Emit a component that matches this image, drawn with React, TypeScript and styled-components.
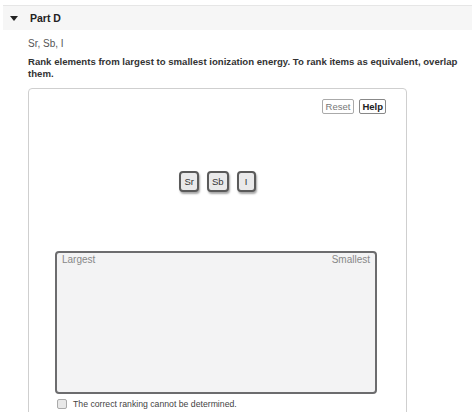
import React from "react";
import styled, { createGlobalStyle } from "styled-components";

const Global = createGlobalStyle`
  html, body { margin: 0; padding: 0; background: #fff; }
  body { font-family: "Liberation Sans", Arial, sans-serif; color: #333; overflow: hidden; }
`;

const Page = styled.div`
  width: 474px;
  height: 412px;
  overflow: hidden;
  padding-top: 5px;
  box-sizing: border-box;
`;

const Header = styled.div`
  margin: 0 2px 0 3px;
  height: 25px;
  border-top: 1px solid #e6e6e6;
  background: #f6f6f6;
  display: flex;
  align-items: center;
  gap: 12px;
  padding-left: 7px;
  box-sizing: border-box;
`;

const Caret = styled.span`
  width: 0;
  height: 0;
  border-left: 4px solid transparent;
  border-right: 4px solid transparent;
  border-top: 5px solid #222;
`;

const HeaderTitle = styled.span`
  font-size: 10.5px;
  font-weight: bold;
  color: #222;
`;

const Body = styled.div`
  padding: 0 0 0 28px;
`;

const Elements = styled.div`
  margin-top: 7px;
  font-size: 10px;
  color: #555;
  line-height: 14px;
`;

const Prompt = styled.div`
  margin-top: 5px;
  font-size: 9.6px;
  font-weight: bold;
  color: #333;
  line-height: 12px;
  width: 440px;
`;

const Panel = styled.div`
  margin-top: 8px;
  width: 379px;
  height: 340px;
  border: 1px solid #cfcfcf;
  border-radius: 4px;
  box-sizing: border-box;
  padding: 10px 29px 0 26px;
`;

const Toolbar = styled.div`
  display: flex;
  justify-content: flex-end;
  gap: 5px;
  margin-right: -9px;
`;

const ToolButton = styled.button<{ $strong?: boolean }>`
  font-family: "Liberation Sans", Arial, sans-serif;
  font-size: 9.5px;
  font-weight: ${(p) => (p.$strong ? "bold" : "normal")};
  color: ${(p) => (p.$strong ? "#222" : "#777")};
  background: #fff;
  border: 1px solid ${(p) => (p.$strong ? "#888" : "#aaa")};
  border-radius: 2px;
  height: 15px;
  padding: 0 ${(p) => (p.$strong ? "2px" : "3px")};
  line-height: 13px;
`;

const Tiles = styled.div`
  margin-top: 57px;
  display: flex;
  justify-content: center;
  gap: 8px;
  padding-left: 3px;
`;

const Tile = styled.div`
  min-width: 9px;
  height: 17px;
  padding: 0 3px;
  border: 2px solid #5a5a5a;
  border-radius: 4px;
  background: #e9e9ea;
  box-shadow: 1px 2px 2px rgba(0, 0, 0, 0.35);
  font-size: 9.5px;
  color: #333;
  display: flex;
  align-items: center;
  justify-content: center;
`;

const Ranking = styled.div`
  margin-top: 59px;
  height: 143px;
  border: 2px solid #6c6c6e;
  border-radius: 4px;
  background: #f3f3f4;
  box-sizing: border-box;
  display: flex;
  justify-content: space-between;
  padding: 0 5px 0 5px;
  font-size: 10px;
  color: #888;
  line-height: 13px;
`;

const Footer = styled.label`
  margin-top: 5px;
  display: flex;
  align-items: center;
  gap: 6px;
  padding-left: 2px;
  font-size: 8.7px;
  color: #444;
`;

const Check = styled.span`
  width: 8px;
  height: 8px;
  border: 1px solid #aaa;
  border-radius: 2px;
  background: #e8e8e8;
`;

export default function App() {
  return (
    <Page>
      <Global />
      <Header>
        <Caret />
        <HeaderTitle>Part D</HeaderTitle>
      </Header>
      <Body>
        <Elements>Sr, Sb, I</Elements>
        <Prompt>
          Rank elements from largest to smallest ionization energy. To rank items as equivalent, overlap them.
        </Prompt>
        <Panel>
          <Toolbar>
            <ToolButton>Reset</ToolButton>
            <ToolButton $strong>Help</ToolButton>
          </Toolbar>
          <Tiles>
            <Tile>Sr</Tile>
            <Tile>Sb</Tile>
            <Tile>I</Tile>
          </Tiles>
          <Ranking>
            <span>Largest</span>
            <span>Smallest</span>
          </Ranking>
          <Footer>
            <Check />
            The correct ranking cannot be determined.
          </Footer>
        </Panel>
      </Body>
    </Page>
  );
}
